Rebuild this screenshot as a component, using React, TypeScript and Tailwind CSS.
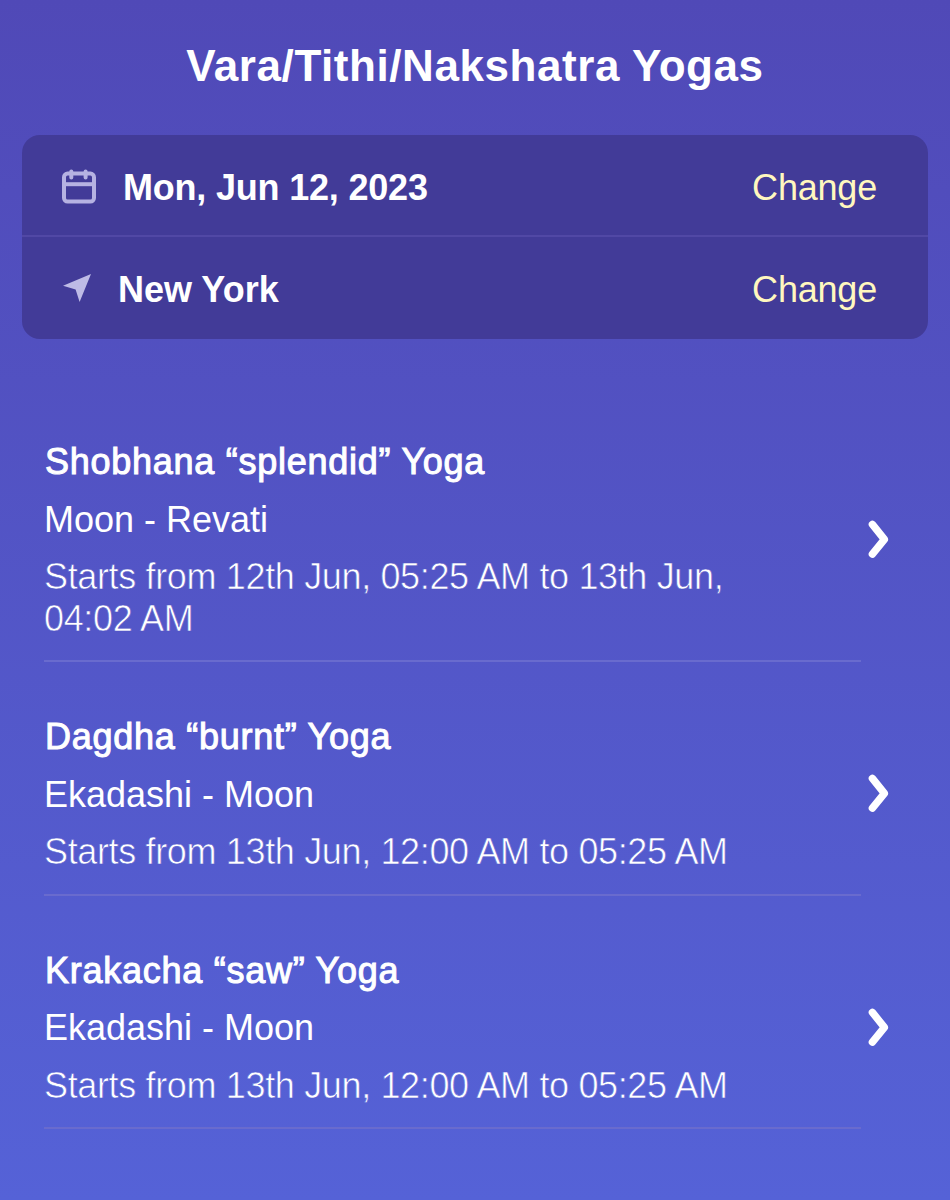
import React from "react";

type TYoga = {
  id: number;
  name: string;
  pair: string;
  time: string;
  stroke: string;
};

// the stroke takes the background tone, which thins the regular face to a light one
const yogas: TYoga[] = [
  {
    id: 1,
    name: "Shobhana “splendid” Yoga",
    pair: "Moon - Revati",
    time: "Starts from 12th Jun, 05:25 AM to 13th Jun, 04:02 AM",
    stroke: "[-webkit-text-stroke:0.6px_#5255c6]",
  },
  {
    id: 2,
    name: "Dagdha “burnt” Yoga",
    pair: "Ekadashi - Moon",
    time: "Starts from 13th Jun, 12:00 AM to 05:25 AM",
    stroke: "[-webkit-text-stroke:0.6px_#545bcd]",
  },
  {
    id: 3,
    name: "Krakacha “saw” Yoga",
    pair: "Ekadashi - Moon",
    time: "Starts from 13th Jun, 12:00 AM to 05:25 AM",
    stroke: "[-webkit-text-stroke:0.6px_#5560d4]",
  },
];

const CalendarIcon = () => (
  <svg className="mt-1" width="36" height="36" viewBox="0 0 36 36" fill="none" stroke="#b6b2e2" strokeWidth="4" strokeLinecap="round">
    <rect x="3" y="4.6" width="30" height="28" rx="3.6" />
    <path d="M3 15.2h30" strokeLinecap="butt" />
    <path d="M10.3 2.4v6.2M24.6 2.4v6.2" />
  </svg>
);

const LocationIcon = () => (
  <svg width="28" height="28" viewBox="0 0 28 28" fill="#bebbe6">
    <path d="M28 0L16.6 28L12.6 15.6L0 11.8Z" />
  </svg>
);

const Chevron = () => (
  <svg width="22" height="40" viewBox="0 0 22 40" fill="none" stroke="#fff" strokeWidth="7.4" strokeLinecap="round" strokeLinejoin="round">
    <path d="M4.4 4.4L16.4 19.4L4.4 34.2" />
  </svg>
);

const YogaItem = ({ yoga }: { yoga: TYoga }) => {
  return (
    <div className="flex pl-11">
      <div className="w-[817px] border-b-2 border-[#696bce] pb-[21px]">
        <div className="flex items-center">
          <div className="w-[720px] shrink-0 text-[36px] leading-[41.5px]">
            <h2 className="pl-px tracking-[0.74px] [-webkit-text-stroke:1px_#fff]">{yoga.name}</h2>
            <p className="mt-4">{yoga.pair}</p>
            <p className={`mt-4 tracking-[-0.35px] ${yoga.stroke}`}>{yoga.time}</p>
          </div>
          <button aria-label={yoga.name} className="ml-[103.5px] shrink-0">
            <Chevron />
          </button>
        </div>
      </div>
    </div>
  );
};

const App = () => {
  return (
    <div className="h-[1200px] w-[950px] overflow-hidden bg-linear-to-b from-[#5049b7] to-[#5562d7] font-['Liberation_Sans',Arial,sans-serif] text-white">
      <h1 className="pt-10 text-center text-[44px] leading-[52px] font-bold tracking-[0.57px]">Vara/Tithi/Nakshatra Yogas</h1>

      <div className="mx-[22px] mt-[43px] h-[204px] rounded-[18px] bg-[#423b98] text-[36px]">
        <div className="flex h-[102px] items-center border-b-2 border-[#5148a5] pr-[51px] pl-[39px]">
          <CalendarIcon />
          <span className="ml-[26px] pt-[5px] font-bold tracking-[-0.2px]">Mon, Jun 12, 2023</span>
          <button className="ml-auto pt-[5px] text-[#fff7bf] tracking-[-0.2px]">Change</button>
        </div>
        <div className="flex h-[102px] items-center pr-[51px] pl-[41px]">
          <LocationIcon />
          <span className="ml-[27px] pt-[4px] font-bold">New York</span>
          <button className="ml-auto pt-[4px] text-[#fff7bf] tracking-[-0.2px]">Change</button>
        </div>
      </div>

      <div className="mt-[102px] flex flex-col gap-[54px]">
        {yogas.map((yoga) => (
          <YogaItem key={yoga.id} yoga={yoga} />
        ))}
      </div>
    </div>
  );
};

export default App;
